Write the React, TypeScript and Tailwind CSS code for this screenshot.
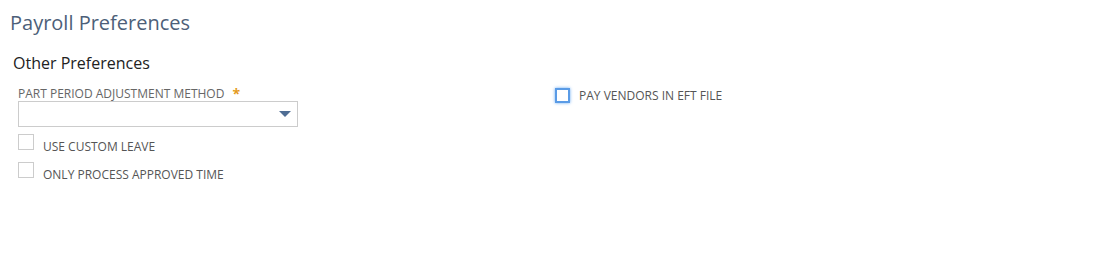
import React from "react";

const Checkbox: React.FC<{ label: string }> = ({ label }) => (
  <label className="flex items-start h-[20px]">
    <span className="w-[16px] h-[16px] border border-[#cccccc] bg-white shrink-0" />
    <span className="ml-[9px] pt-[6px] text-[12px] leading-[14px] text-[#555555] uppercase">{label}</span>
  </label>
);

export default function App() {
  return (
    <div className="w-[1109px] h-[279px] bg-white font-['Open_Sans',sans-serif] pl-[10px] pt-[11px]">
      <h1 className="text-[20px] leading-[24px] text-[#4d5f79]">Payroll Preferences</h1>
      <h2 className="mt-[18px] pl-[3px] text-[16px] leading-[21px] text-[#222222]">Other Preferences</h2>

      <div className="flex mt-[13px]">
        <div className="w-[545px] pl-[8px]">
          <div className="flex items-center text-[12px] leading-[14px] text-[#666666] uppercase">
            Part Period Adjustment Method
            <span className="ml-[8px] text-[#e49b1d] text-[14px] leading-[14px] font-bold">*</span>
          </div>
          <div className="w-[280px] h-[26px] border border-[#cccccc] bg-white flex items-center justify-end pr-[6px]">
            <svg width="12" height="6" viewBox="0 0 12 6">
              <path d="M0 0 H12 L6 6 Z" fill="#4f6d94" />
            </svg>
          </div>
          <div className="mt-[7px] flex flex-col gap-[8px]">
            <Checkbox label="Use Custom Leave" />
            <Checkbox label="Only Process Approved Time" />
          </div>
        </div>

        <div className="pt-[1px]">
          <label className="flex items-center">
            <span className="w-[15px] h-[15px] border-2 border-[#5a9be6] bg-white shadow-[0_0_3px_#6aaaf2] shrink-0" />
            <span className="ml-[9px] text-[12px] leading-[14px] text-[#555555] uppercase">Pay Vendors in EFT File</span>
          </label>
        </div>
      </div>
    </div>
  );
}
